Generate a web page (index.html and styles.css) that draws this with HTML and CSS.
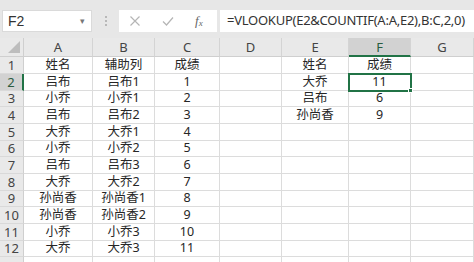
FILE: index.html
```html
<!DOCTYPE html>
<html>
<head>
<meta charset="utf-8">
<link rel="stylesheet" href="styles.css">
</head>
<body>
<div class="app">
  <div class="fbar">
    <div class="namebox"><span>F2</span><span class="dd">▾</span></div>
    <div class="sep"><i></i><i></i><i></i></div>
    <div class="btns">
      <svg class="ic" width="12" height="12" viewBox="0 0 12 12"><path d="M1.5 1.5 L10.5 10.5 M10.5 1.5 L1.5 10.5" stroke="#b5b5b5" stroke-width="1.2" fill="none"/></svg>
      <svg class="ic" width="12" height="12" viewBox="0 0 12 12"><path d="M1 6.5 L4.5 10 L11 2.5" stroke="#b5b5b5" stroke-width="1.2" fill="none"/></svg>
      <span class="fx">f<sub>x</sub></span>
    </div>
    <div class="formula"><span>=VLOOKUP(E2&amp;COUNTIF(A:A,E2),B:C,2,0)</span></div>
  </div>
  <div class="sheet">
    <div class="corner"><svg width="12" height="12" viewBox="0 0 12 12"><path d="M12 0 L12 12 L0 12 Z" fill="#bdbdbd"/></svg></div>
    <div class="ch">A</div><div class="ch">B</div><div class="ch">C</div><div class="ch">D</div><div class="ch">E</div><div class="ch sel">F</div><div class="ch">G</div>

    <div class="rh">1</div><div class="c">姓名</div><div class="c">辅助列</div><div class="c">成绩</div><div class="c"></div><div class="c">姓名</div><div class="c">成绩</div><div class="c"></div>
    <div class="rh sel">2</div><div class="c">吕布</div><div class="c">吕布1</div><div class="c">1</div><div class="c"></div><div class="c">大乔</div><div class="c active">11<span class="handle"></span></div><div class="c"></div>
    <div class="rh">3</div><div class="c">小乔</div><div class="c">小乔1</div><div class="c">2</div><div class="c"></div><div class="c">吕布</div><div class="c">6</div><div class="c"></div>
    <div class="rh">4</div><div class="c">吕布</div><div class="c">吕布2</div><div class="c">3</div><div class="c"></div><div class="c">孙尚香</div><div class="c">9</div><div class="c"></div>
    <div class="rh">5</div><div class="c">大乔</div><div class="c">大乔1</div><div class="c">4</div><div class="c"></div><div class="c"></div><div class="c"></div><div class="c"></div>
    <div class="rh">6</div><div class="c">小乔</div><div class="c">小乔2</div><div class="c">5</div><div class="c"></div><div class="c"></div><div class="c"></div><div class="c"></div>
    <div class="rh">7</div><div class="c">吕布</div><div class="c">吕布3</div><div class="c">6</div><div class="c"></div><div class="c"></div><div class="c"></div><div class="c"></div>
    <div class="rh">8</div><div class="c">大乔</div><div class="c">大乔2</div><div class="c">7</div><div class="c"></div><div class="c"></div><div class="c"></div><div class="c"></div>
    <div class="rh">9</div><div class="c">孙尚香</div><div class="c">孙尚香1</div><div class="c">8</div><div class="c"></div><div class="c"></div><div class="c"></div><div class="c"></div>
    <div class="rh">10</div><div class="c">孙尚香</div><div class="c">孙尚香2</div><div class="c">9</div><div class="c"></div><div class="c"></div><div class="c"></div><div class="c"></div>
    <div class="rh">11</div><div class="c">小乔</div><div class="c">小乔3</div><div class="c">10</div><div class="c"></div><div class="c"></div><div class="c"></div><div class="c"></div>
    <div class="rh">12</div><div class="c">大乔</div><div class="c">大乔3</div><div class="c">11</div><div class="c"></div><div class="c"></div><div class="c"></div><div class="c"></div>
    <div class="rh"></div><div class="c"></div><div class="c"></div><div class="c"></div><div class="c"></div><div class="c"></div><div class="c"></div><div class="c"></div>
  </div>
</div>
</body>
</html>
```

FILE: styles.css
```css
* { box-sizing: border-box; }
html, body { margin: 0; padding: 0; background: #fff; }
body { width: 474px; height: 262px; overflow: hidden; font-family: "Noto Sans CJK SC", "Noto Sans", sans-serif; color: #262626; }
.app { width: 474px; }
.fbar {
  height: 38px; background: #e7e7e7; display: flex; align-items: flex-start;
  padding: 10px 0 0 2px;
}
.namebox {
  width: 90px; height: 22px; background: #fff; border: 1px solid #dadada;
  display: flex; align-items: center; justify-content: space-between;
  padding: 0 6px 0 5px; font-size: 14px; color: #333;
  font-family: "Liberation Sans", "Noto Sans", sans-serif;
}
.dd { font-size: 9px; color: #777; }
.sep { width: 27px; height: 22px; display: flex; flex-direction: column; align-items: center; justify-content: center; gap: 2px; }
.sep i { width: 2px; height: 2px; background: #b8b8b8; display: block; }
.btns {
  width: 98px; height: 22px; background: #fff; display: flex; align-items: center;
  padding-left: 10px; gap: 21px;
}
.fx { font-family: "Liberation Serif", serif; font-style: italic; font-size: 13px; color: #666; }
.fx sub { font-size: 9px; vertical-align: -1px; }
.formula {
  margin-left: 3px; flex: 1; min-width: 0; height: 22px; background: #fff; font-size: 13px; line-height: 21px;
  padding-left: 7px; color: #333; font-family: "Noto Sans", "Liberation Sans", sans-serif;
  white-space: nowrap; letter-spacing: -0.25px;
}
.sheet {
  display: grid;
  grid-template-columns: 24px 69px 62px 65px 62px 67px 62px 63px;
  grid-template-rows: 19px 17px 17px 16px 17px 17px 16px 17px 17px 16px 17px 17px 16px 10px;
  font-size: 12px;
}
.corner { background: #e9e9e9; border-right: 1px solid #cfcfcf; border-bottom: 1px solid #cfcfcf; display: flex; align-items: flex-end; justify-content: flex-end; padding: 0 3px 3px 0; }
.ch {
  background: #e9e9e9; border-right: 1px solid #d4d4d4; border-bottom: 1px solid #cfcfcf;
  display: flex; align-items: center; justify-content: center; color: #444;
  font-family: "Noto Sans", "Liberation Sans", sans-serif; font-size: 13px;
}
.ch.sel { background: #d2d2d2; border-bottom: 2px solid #217346; color: #2a5c3f; }
.rh {
  background: #e9e9e9; border-right: 1px solid #cfcfcf; border-bottom: 1px solid #d9d9d9;
  display: flex; align-items: center; justify-content: center; color: #444;
  font-family: "Noto Sans", "Liberation Sans", sans-serif; font-size: 13px; line-height: 1;
}
.rh.sel { background: #d2d2d2; border-right: 2px solid #217346; color: #2a5c3f; }
.c {
  border-right: 1px solid #dcdcdc; border-bottom: 1px solid #dcdcdc;
  display: flex; align-items: center; justify-content: center; line-height: 1;
  white-space: nowrap; font-family: "Noto Sans", "Noto Sans CJK SC", sans-serif; font-size: 12.5px;
}
.c.active { position: relative; outline: 2px solid #217346; outline-offset: -1px; }
.handle { position: absolute; right: -3px; bottom: -3px; width: 5px; height: 5px; background: #217346; border: 1px solid #fff; }
```
